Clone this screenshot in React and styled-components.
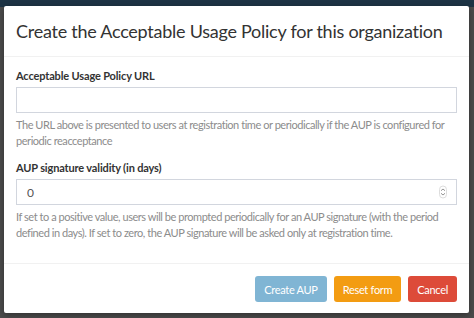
import React from "react";
import styled, { createGlobalStyle } from "styled-components";

const Global = createGlobalStyle`
  html, body { margin: 0; padding: 0; }
  body {
    background: #4b4b4b;
    font-family: "Lato", "Noto Sans", sans-serif;
    -webkit-font-smoothing: antialiased;
  }
`;

const Backdrop = styled.div`
  position: relative;
  min-height: 318px;
  box-sizing: border-box;
  padding: 6px 5px 5px 4px;
  background: linear-gradient(#1d3344 0, #1d3344 7px, #4b4b4b 7px);
`;

const Modal = styled.div`
  width: 465px;
  background: #fff;
  border-radius: 2px;
  box-shadow: 0 2px 6px rgba(0, 0, 0, 0.35);
  display: flex;
  flex-direction: column;
`;

const Header = styled.div`
  height: 50px;
  display: flex;
  align-items: center;
  padding: 0 12px;
  border-bottom: 1px solid #f1f1f1;
`;

const Title = styled.h4`
  margin: 0;
  font-size: 18px;
  font-weight: 400;
  color: #333;
  letter-spacing: -0.25px;
  white-space: nowrap;
`;

const Body = styled.div`
  padding: 10px 12px 22px;
  display: flex;
  flex-direction: column;
  gap: 10px;
`;

const Group = styled.div`
  display: flex;
  flex-direction: column;
`;

const Label = styled.label`
  font-size: 11px;
  font-weight: 700;
  color: #333;
  line-height: 18px;
  margin-bottom: 2px;
  letter-spacing: -0.15px;
`;

const Input = styled.input`
  box-sizing: border-box;
  height: 26px;
  width: 100%;
  border: 1px solid #d2d6de;
  padding: 0 10px;
  font-family: inherit;
  font-size: 12px;
  color: #555;
  outline: none;
`;

const NumberWrap = styled.div`
  position: relative;
`;

const Spinner = styled.span`
  position: absolute;
  right: 10px;
  top: 50%;
  transform: translateY(-50%);
  width: 8px;
  height: 13px;
  border: 1px solid #ddd;
  border-radius: 4px;
  display: flex;
  align-items: center;
  justify-content: center;
  box-sizing: border-box;
`;

const Help = styled.p`
  margin: 4px 0 0;
  font-size: 11px;
  line-height: 16px;
  color: #8c8c8c;
  letter-spacing: -0.45px;
`;

const Footer = styled.div`
  border-top: 1px solid #f1f1f1;
  padding: 12px 12px 11px;
  display: flex;
  justify-content: flex-end;
  gap: 7px;
`;

const colors = {
  primary: "#80b5d4",
  warning: "#f39c12",
  danger: "#dd4b39",
};

const Button = styled.button`
  height: 26px;
  padding: 0 9px;
  border: none;
  border-radius: 3px;
  background: ${(p) => colors[p.$variant]};
  color: #fff;
  font-family: inherit;
  font-size: 11px;
  letter-spacing: -0.3px;
  cursor: ${(p) => (p.disabled ? "not-allowed" : "pointer")};
`;

export default function App() {
  return (
    <>
      <Global />
      <Backdrop>
        <Modal>
          <Header>
            <Title>Create the Acceptable Usage Policy for this organization</Title>
          </Header>
          <Body>
            <Group>
              <Label>Acceptable Usage Policy URL</Label>
              <Input type="text" defaultValue="" />
              <Help>
                The URL above is presented to users at registration time or periodically if the AUP is configured for periodic reacceptance
              </Help>
            </Group>
            <Group>
              <Label>AUP signature validity (in days)</Label>
              <NumberWrap>
                <Input type="text" defaultValue="0" />
                <Spinner>
                  <svg width="6" height="9" viewBox="0 0 6 9">
                    <path d="M1 3.2 L3 1.5 L5 3.2 M1 5.8 L3 7.5 L5 5.8" fill="none" stroke="#888" strokeWidth="0.9" />
                  </svg>
                </Spinner>
              </NumberWrap>
              <Help>
                If set to a positive value, users will be prompted periodically for an AUP signature (with the period defined in days). If set to zero, the AUP signature will be asked only at registration time.
              </Help>
            </Group>
          </Body>
          <Footer>
            <Button $variant="primary" disabled>Create AUP</Button>
            <Button $variant="warning">Reset form</Button>
            <Button $variant="danger">Cancel</Button>
          </Footer>
        </Modal>
      </Backdrop>
    </>
  );
}
